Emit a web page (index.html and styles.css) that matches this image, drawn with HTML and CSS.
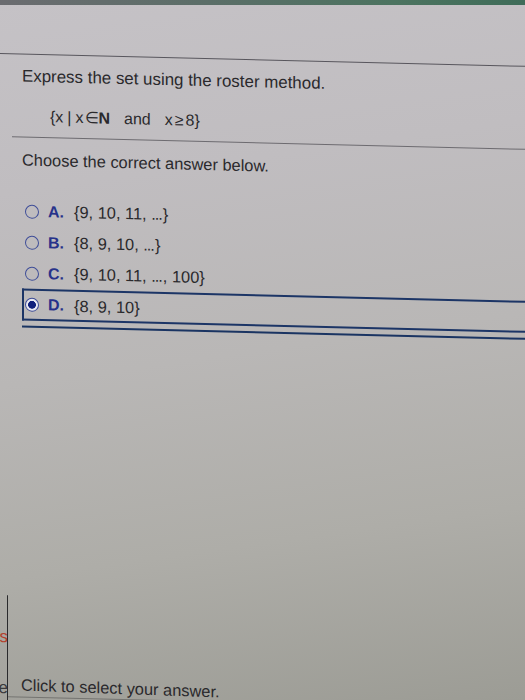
FILE: index.html
```html
<!DOCTYPE html>
<html lang="en">
<head>
<meta charset="utf-8">
<title>Roster method</title>
<link rel="stylesheet" href="styles.css">
</head>
<body>
<div class="topbar"></div>
<div class="screen">
  <div class="header"></div>
  <div class="question">
    <p class="prompt">Express the set using the roster method.</p>
    <p class="formula">{x<span class="bar">|</span>x<span class="elem">∈</span><b>N</b><span class="gap"></span>and<span class="gap"></span>x<span class="ge">≥</span>8}</p>
  </div>
  <p class="instruction">Choose the correct answer below.</p>
  <ul class="options">
    <li class="option"><span class="radio"></span><span class="letter">A.</span><span class="answer">{9, 10, 11, <span class="dots">...</span>}</span></li>
    <li class="option"><span class="radio"></span><span class="letter">B.</span><span class="answer">{8, 9, 10, <span class="dots">...</span>}</span></li>
    <li class="option"><span class="radio"></span><span class="letter">C.</span><span class="answer">{9, 10, 11, <span class="dots">...</span>, 100}</span></li>
    <li class="option selected"><span class="radio checked"></span><span class="letter">D.</span><span class="answer">{8, 9, 10}</span></li>
  </ul>
  <div class="rule"></div>
  <div class="footer">
    <div class="side">
      <span class="side-s">s</span>
      <span class="side-e">e</span>
    </div>
    <div class="status">
      <p class="hint">Click to select your answer.</p>
      <div class="baseline"></div>
    </div>
  </div>
</div>
</body>
</html>
```

FILE: styles.css
```css
html {
  background: linear-gradient(172deg, #c5c2c6 0%, #c0bdc0 25%, #b9b7b6 50%, #aeada8 75%, #9c9c95 100%);
  min-height: 100%;
}
body {
  margin: 0;
  width: 525px;
  height: 700px;
  overflow: hidden;
  font-family: "Liberation Sans", Arial, sans-serif;
  color: #2a292c;
  font-size: 16px;
}
.topbar {
  height: 5px;
  background: linear-gradient(90deg, #6b6c70 0%, #5b6e68 40%, #4c7360 75%, #3f6c59 100%);
}
.screen {
  width: 545px;
  min-height: 695px;
  display: flex;
  flex-direction: column;
  transform: skewY(1.4deg);
  transform-origin: 0 0;
}
.header {
  height: 48px;
  border-bottom: 1px solid #58565d;
}
.question {
  margin-left: 12px;
  padding: 12px 0 10px 10px;
  border-bottom: 1px solid #6d6b70;
}
.prompt {
  margin: 0;
  height: 20px;
  line-height: 20px;
  font-size: 16.9px;
}
.formula {
  margin: 20px 0 0 28px;
  height: 20px;
  line-height: 20px;
  font-size: 16px;
}
.bar { margin: 0 4px; }
.elem { margin: 0 0 0 1px; }
.ge { margin: 0 2px; }
.gap { display: inline-block; width: 14px; }
.instruction {
  margin: 12px 0 0 22px;
  height: 20px;
  line-height: 20px;
  font-size: 16.4px;
}
.options {
  list-style: none;
  margin: 26px 0 0 22px;
  padding: 0;
}
.option {
  box-sizing: border-box;
  height: 31px;
  display: flex;
  align-items: center;
  border: 2px solid transparent;
  border-right: 0;
  padding-left: 1px;
}
.option.selected {
  height: 32px;
  border-color: #1c3566;
}
.radio {
  box-sizing: border-box;
  width: 14px;
  height: 14px;
  border: 1.6px solid #3e4d98;
  border-radius: 50%;
  flex: none;
}
.radio.checked {
  background: radial-gradient(circle, #0f1f7c 0 3.6px, #e9e9f2 4.2px 100%);
}
.letter {
  width: 26px;
  margin-left: 9px;
  color: #27328a;
  font-weight: bold;
  font-size: 16px;
}
.answer {
  font-size: 16.4px;
}
.dots {
  letter-spacing: -1px;
  margin-right: 1px;
}
.rule {
  margin: 5px 0 0 22px;
  height: 2px;
  background: #1a3462;
}
.footer {
  margin-top: auto;
  height: 105px;
  display: flex;
}
.side {
  width: 7px;
  border-right: 1.5px solid #2a2a2c;
  overflow: hidden;
  display: flex;
  flex-direction: column;
  align-items: flex-end;
  font-size: 17px;
  line-height: 20px;
}
.side-s {
  margin-top: 32px;
  color: #b4402c;
  margin-right: -1px;
}
.side-e {
  margin-top: 31px;
  color: #3a3a3c;
  margin-right: -1px;
}
.status {
  flex: 1;
  display: flex;
  flex-direction: column;
  justify-content: flex-end;
}
.hint {
  margin: 0 0 0 13px;
  line-height: 20px;
  font-size: 16.4px;
  transform: skewY(0.6deg);
  transform-origin: 0 50%;
}
.baseline {
  margin-top: 2px;
  height: 1px;
  background: rgba(60, 60, 60, 0.45);
  margin-bottom: 3px;
}
```
